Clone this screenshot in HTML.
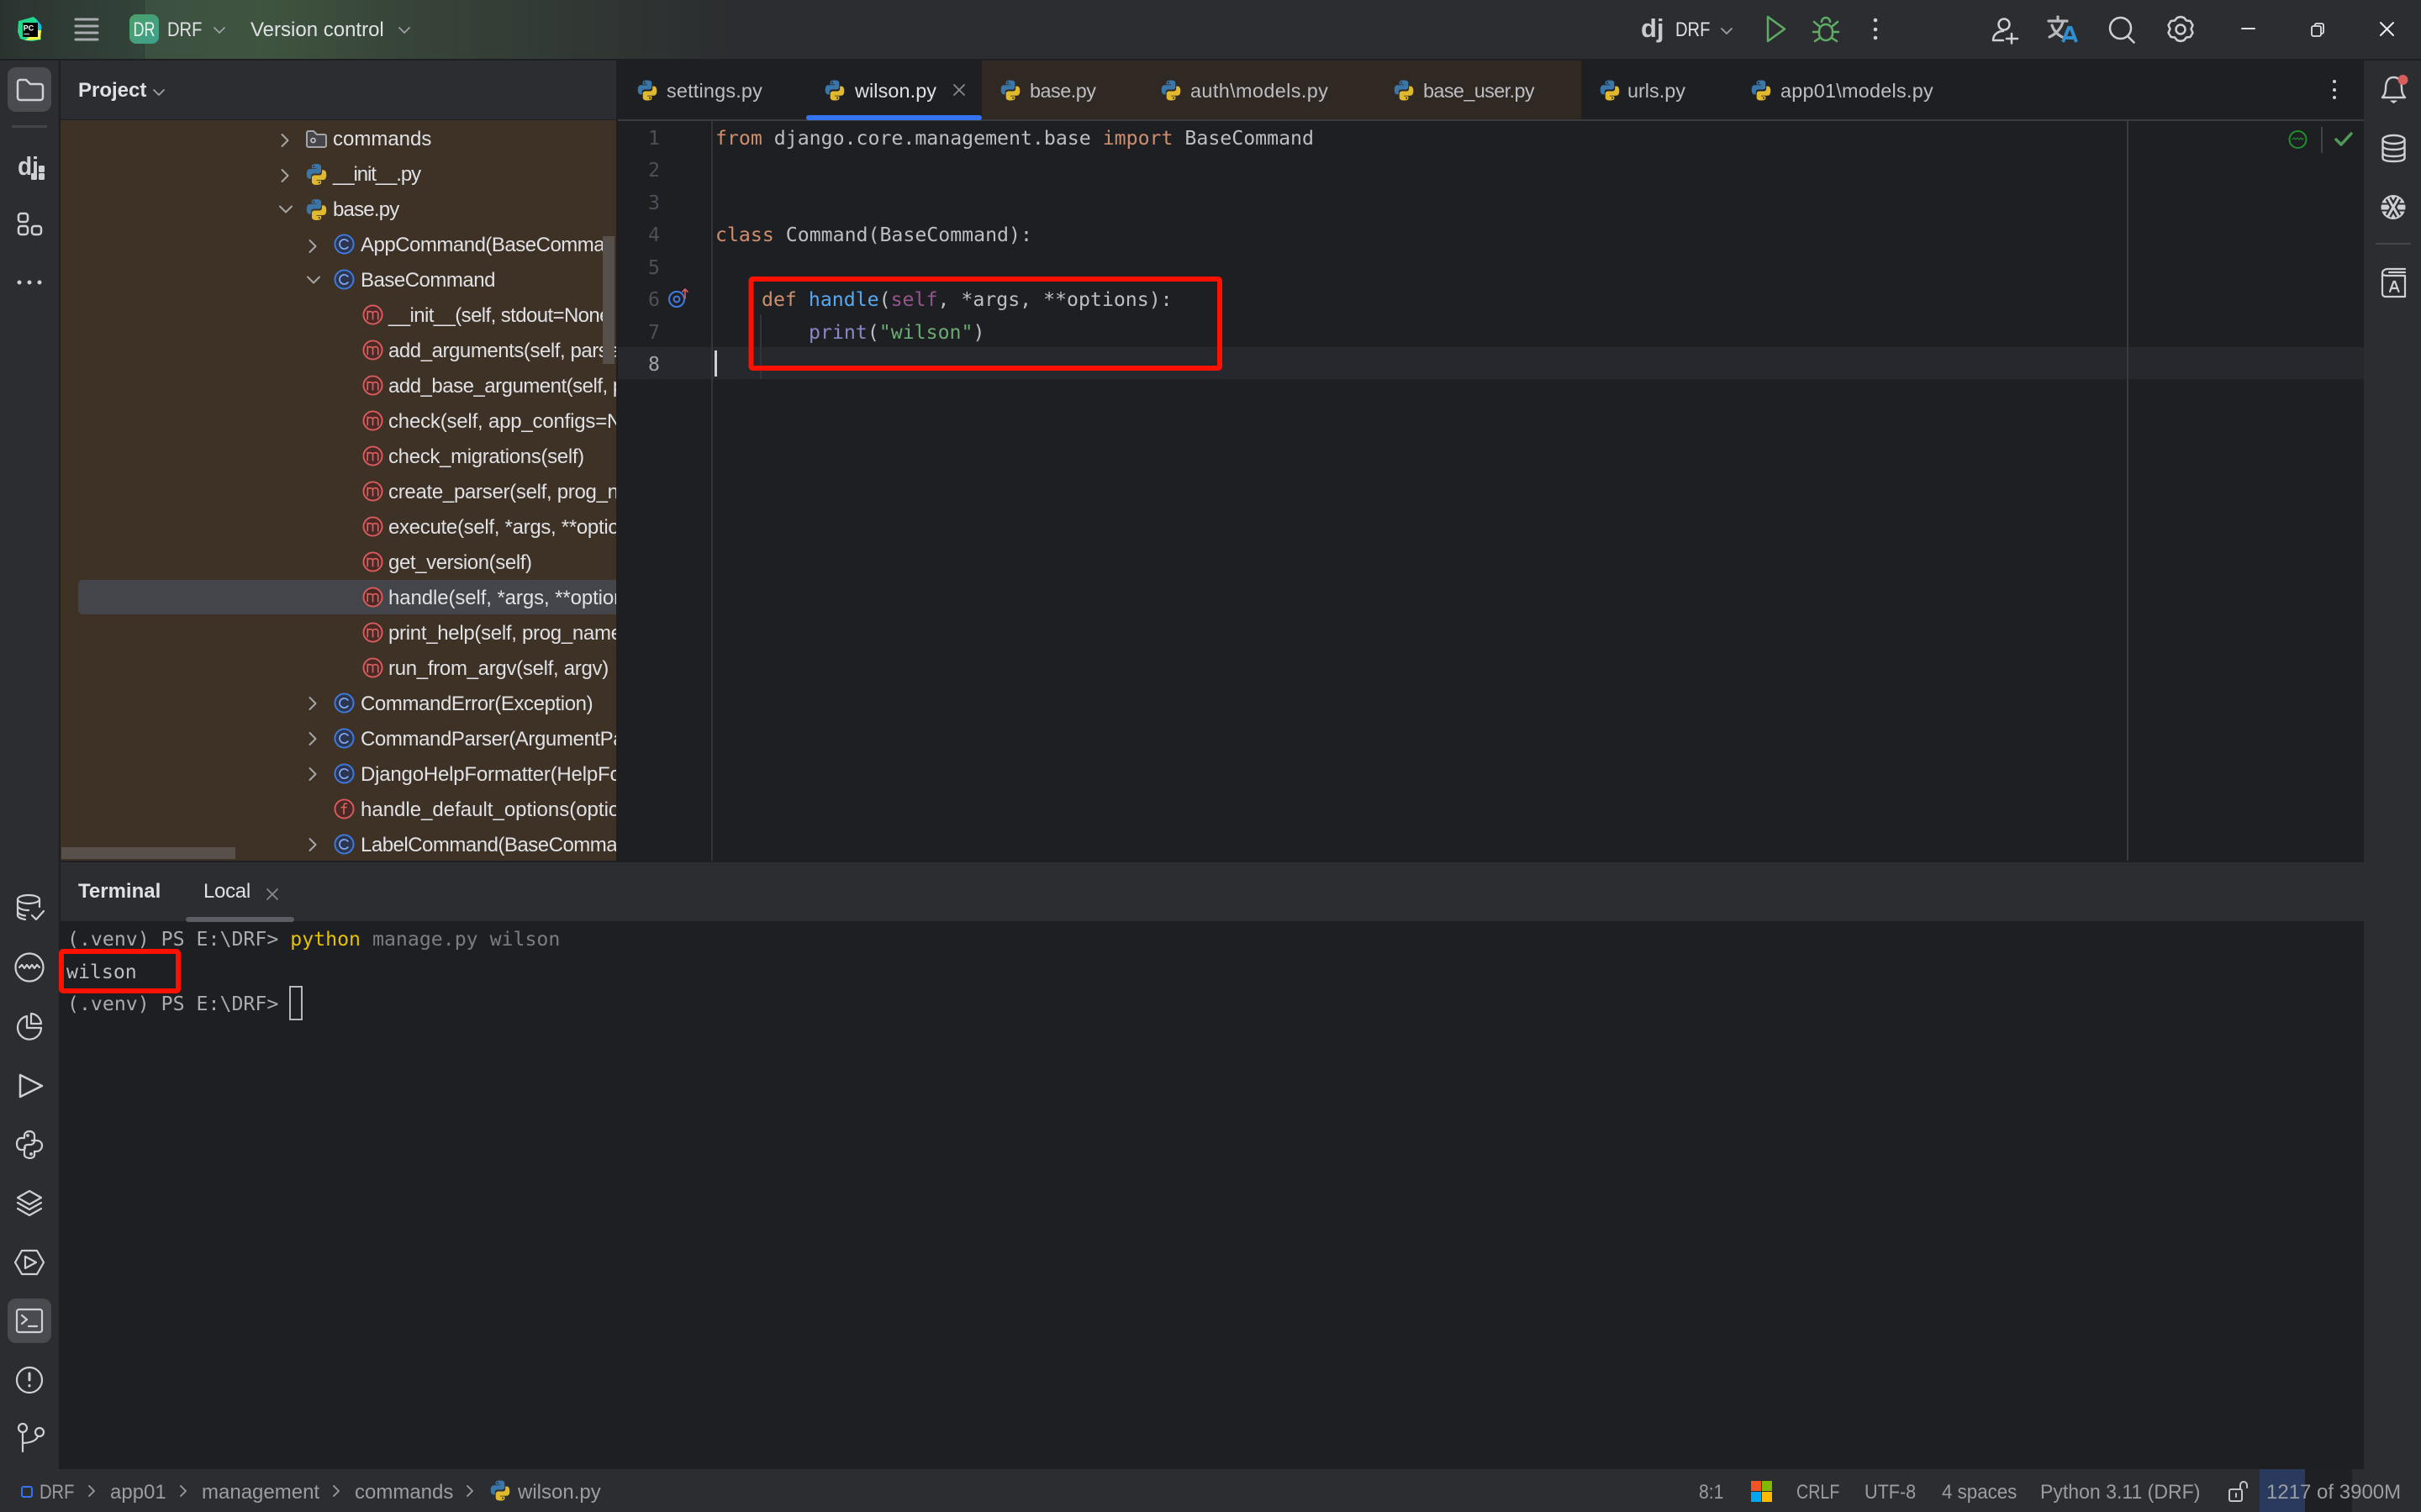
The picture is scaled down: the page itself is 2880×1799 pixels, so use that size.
<!DOCTYPE html>
<html lang="en"><head><meta charset="utf-8"><title>wilson.py - DRF</title>
<style>
html,body{margin:0;padding:0;background:#1e1f22}
#p{position:relative;width:2880px;height:1799px;overflow:hidden;background:#1e1f22;font-family:"Liberation Sans",sans-serif;font-size:24px;color:#dfe1e5}
.b{position:absolute}
.t{position:absolute;white-space:pre;line-height:40px;height:40px;transform-origin:0 50%}
.m{font-family:"DejaVu Sans Mono","Liberation Mono",monospace;font-size:23.2px;white-space:pre;position:absolute;line-height:38px;height:38px;color:#bcbec4}
.tree .t{color:#dfe1e5}
.tab{color:#bcbec4;font-size:23.4px;top:88px}
.st{color:#9a9da4;top:1756px;font-size:24px}
.k{color:#cf8e6d}.f{color:#56a8f5}.s{color:#94558d}.pr{color:#8888c6}.str{color:#6aab73}
.ln{color:#4b5059;width:20px;left:768px;text-align:center}
svg{position:absolute;left:0;top:0}
</style></head><body><div id="p">

<!-- title bar -->
<div class="b" style="left:0;top:0;width:2880px;height:70px;background:#2b2d30"></div>
<div class="b" style="left:0;top:0;width:171px;height:70px;background:linear-gradient(90deg,#2b3330,#33443a)"></div>
<div class="b" style="left:171px;top:0;width:700px;height:70px;background:linear-gradient(90deg,#3c5040 0%,#3f5540 20%,#384539 42%,#2b2d30 100%)"></div>
<div class="t" style="left:199px;top:16px;color:#dfe1e5;transform:scaleX(.84)">DRF</div>
<div class="t" style="left:298px;top:16px;color:#dfe1e5">Version control</div>
<div class="t" style="left:1993px;top:16px;color:#dfe1e5;transform:scaleX(.84)">DRF</div>

<!-- left strip / right strip -->
<div class="b" style="left:0;top:72px;width:70px;height:1676px;background:#2b2d30"></div>
<div class="b" style="left:2812px;top:72px;width:68px;height:1674px;background:#2b2d30"></div>
<div class="b" style="left:9px;top:80px;width:52px;height:53px;background:#494b50;border-radius:10px"></div>
<div class="b" style="left:14px;top:149px;width:42px;height:3px;background:#43454a"></div>
<div class="b" style="left:9px;top:1545px;width:52px;height:53px;background:#494b50;border-radius:10px"></div>
<div class="b" style="left:2826px;top:289px;width:42px;height:2px;background:#43454a"></div>

<!-- project panel -->
<div class="b" style="left:72px;top:72px;width:661px;height:70px;background:#2b2d30"></div>
<div class="b" style="left:72px;top:142px;width:661px;height:1px;background:#1e1f22"></div>
<div class="t" style="left:93px;top:88px;font-weight:bold;color:#dfe1e5">Project</div>
<div class="b tree" style="left:72px;top:143px;width:661px;height:881px;background:#3e3126;overflow:hidden">
 <div class="b" style="left:21px;top:547px;width:640px;height:41px;background:#43454a;border-radius:6px 0 0 6px"></div>
 <div class="t" style="left:324px;top:3px">commands</div>
 <div class="t" style="left:324px;top:45px;letter-spacing:-1.1px">__init__.py</div>
 <div class="t" style="left:324px;top:87px;letter-spacing:-.8px">base.py</div>
 <div class="t" style="left:357px;top:129px;letter-spacing:-.5px">AppCommand(BaseCommand)</div>
 <div class="t" style="left:357px;top:171px;letter-spacing:-.5px">BaseCommand</div>
 <div class="t" style="left:390px;top:213px;letter-spacing:-.6px">__init__(self, stdout=None, stderr=None)</div>
 <div class="t" style="left:390px;top:255px;letter-spacing:-.45px">add_arguments(self, parser)</div>
 <div class="t" style="left:390px;top:297px;letter-spacing:-.5px">add_base_argument(self, parser)</div>
 <div class="t" style="left:390px;top:339px;letter-spacing:-.2px">check(self, app_configs=None)</div>
 <div class="t" style="left:390px;top:381px;letter-spacing:-.33px">check_migrations(self)</div>
 <div class="t" style="left:390px;top:423px;letter-spacing:-.3px">create_parser(self, prog_name)</div>
 <div class="t" style="left:390px;top:465px;letter-spacing:-.3px">execute(self, *args, **options)</div>
 <div class="t" style="left:390px;top:507px;letter-spacing:-.4px">get_version(self)</div>
 <div class="t" style="left:390px;top:549px;letter-spacing:-.1px">handle(self, *args, **options)</div>
 <div class="t" style="left:390px;top:591px;letter-spacing:-.3px">print_help(self, prog_name, subcommand)</div>
 <div class="t" style="left:390px;top:633px;letter-spacing:-.3px">run_from_argv(self, argv)</div>
 <div class="t" style="left:357px;top:675px;letter-spacing:-.4px">CommandError(Exception)</div>
 <div class="t" style="left:357px;top:717px;letter-spacing:-.4px">CommandParser(ArgumentParser)</div>
 <div class="t" style="left:357px;top:759px;letter-spacing:-.2px">DjangoHelpFormatter(HelpFormatter)</div>
 <div class="t" style="left:357px;top:801px">handle_default_options(options)</div>
 <div class="t" style="left:357px;top:843px;letter-spacing:-.5px">LabelCommand(BaseCommand)</div>
 <div class="b" style="left:645px;top:138px;width:14px;height:152px;background:#57504a"></div>
 <div class="b" style="left:1px;top:865px;width:207px;height:14px;background:#57504a"></div>
</div>

<!-- tabs -->
<div class="b" style="left:1168px;top:72px;width:713px;height:70px;background:#2f2823"></div>
<div class="b" style="left:735px;top:142px;width:2077px;height:2px;background:#393b40"></div>
<div class="b" style="left:959px;top:137px;width:209px;height:6px;background:#3574f0;border-radius:4px"></div>
<div class="t tab" style="left:793px;letter-spacing:.2px">settings.py</div>
<div class="t tab" style="left:1017px;color:#dfe1e5;letter-spacing:.1px">wilson.py</div>
<div class="t tab" style="left:1225px;letter-spacing:-.5px">base.py</div>
<div class="t tab" style="left:1416px;letter-spacing:.4px">auth\models.py</div>
<div class="t tab" style="left:1693px;letter-spacing:-.6px">base_user.py</div>
<div class="t tab" style="left:1936px">urls.py</div>
<div class="t tab" style="left:2118px;letter-spacing:.25px">app01\models.py</div>

<!-- editor -->
<div class="b" style="left:735px;top:413px;width:2077px;height:38px;background:#26282e"></div>
<div class="b" style="left:846px;top:144px;width:2px;height:880px;background:#313438"></div>
<div class="b" style="left:2530px;top:144px;width:2px;height:880px;background:#393b40"></div>
<div class="b" style="left:904px;top:374px;width:2px;height:77px;background:#313438"></div>
<div class="m ln" style="top:146px">1</div>
<div class="m ln" style="top:184px">2</div>
<div class="m ln" style="top:223px">3</div>
<div class="m ln" style="top:261px">4</div>
<div class="m ln" style="top:300px">5</div>
<div class="m ln" style="top:338px">6</div>
<div class="m ln" style="top:377px">7</div>
<div class="m ln" style="top:415px;color:#a1a3ab">8</div>
<div class="m" style="left:851px;top:146px"><span class="k">from</span> django.core.management.base <span class="k">import</span> BaseCommand</div>
<div class="m" style="left:851px;top:261px"><span class="k">class</span> Command(BaseCommand):</div>
<div class="m" style="left:906px;top:338px"><span class="k">def</span> <span class="f">handle</span>(<span class="s">self</span>, *args, **options):</div>
<div class="m" style="left:962px;top:377px"><span class="pr">print</span>(<span class="str">"wilson"</span>)</div>
<div class="b" style="left:850px;top:417px;width:3px;height:31px;background:#ced0d6"></div>

<!-- terminal -->
<div class="b" style="left:72px;top:1024px;width:2740px;height:2px;background:#1e1f22"></div>
<div class="b" style="left:72px;top:1026px;width:2740px;height:70px;background:#2b2d30"></div>
<div class="t" style="left:93px;top:1041px;font-weight:bold;color:#dfe1e5">Terminal</div>
<div class="t" style="left:242px;top:1041px;color:#dfe1e5;letter-spacing:-.3px">Local</div>
<div class="b" style="left:221px;top:1091px;width:129px;height:6px;background:#5a5d63;border-radius:3px"></div>
<div class="m" style="left:80px;top:1099px;color:#a9abb2">(.venv) PS E:\DRF&gt; <span style="color:#e5c100">python</span> <span style="color:#7a7d84">manage.py wilson</span></div>
<div class="m" style="left:79px;top:1138px;color:#bcbec4">wilson</div>
<div class="m" style="left:80px;top:1176px;color:#a9abb2">(.venv) PS E:\DRF&gt;</div>
<div class="b" style="left:344px;top:1173px;width:12px;height:37px;border:2px solid #b5b7bd"></div>

<!-- status bar -->
<div class="b" style="left:0;top:1748px;width:2880px;height:51px;background:#2b2d30"></div>
<div class="b" style="left:2812px;top:1746px;width:68px;height:2px;background:#2b2d30"></div>
<div class="b" style="left:2688px;top:1748px;width:54px;height:51px;background:#2a3a5e"></div>
<div class="b" style="left:2742px;top:1748px;width:56px;height:51px;background:#1f2023"></div>
<div class="t st" style="left:47px;transform:scaleX(.84)">DRF</div>
<div class="t st" style="left:131px">app01</div>
<div class="t st" style="left:240px">management</div>
<div class="t st" style="left:422px">commands</div>
<div class="t st" style="left:616px">wilson.py</div>
<div class="t st" style="left:2021px;transform:scaleX(.88)">8:1</div>
<div class="t st" style="left:2137px;transform:scaleX(.82)">CRLF</div>
<div class="t st" style="left:2218px;transform:scaleX(.9)">UTF-8</div>
<div class="t st" style="left:2310px;transform:scaleX(.93)">4 spaces</div>
<div class="t st" style="left:2427px;transform:scaleX(.96)">Python 3.11 (DRF)</div>
<div class="t st" style="left:2696px">1217 of 3900M</div>

<!-- icons -->
<svg width="2880" height="1799" viewBox="0 0 2880 1799" fill="none" stroke-linecap="round" stroke-linejoin="round">
<defs>
<symbol id="py" viewBox="0 0 24 24" overflow="visible">
 <path fill="#3a76a8" fill-rule="evenodd" d="M11.9 0C6.2 0 6.6 2.4 6.6 2.4v2.6h5.4v.8H4.4S.7 5.400.7 11.300s3.200 5.600 3.200 5.600h1.900v-2.700s-.1-3.200 3.100-3.200h5.400s3 0 3-2.900V3.200S17.900 0 11.900 0zM8.900 1.700a1 1 0 110 2 1 1 0 010-2z"/>
 <path fill="#e0b92e" fill-rule="evenodd" d="M12.100 24c5.700 0 5.300-2.400 5.300-2.400V19H12v-.8h7.600s3.700.4 3.700-5.500-3.200-5.600-3.200-5.600h-1.900v2.700s.1 3.200-3.100 3.200H9.700s-3 0-3 2.900v4.300S6.100 24 12.100 24zm3-1.700a1 1 0 110-2 1 1 0 010 2z"/>
</symbol>
<symbol id="cc" viewBox="0 0 26 26" overflow="visible"><circle cx="13" cy="13" r="11.500" fill="#2c3550" stroke="#3f7be0" stroke-width="2"/><path d="M17.500 9.300a5.800 5.800 0 1 0 0 7.400" stroke="#7ea6ef" stroke-width="1.800"/></symbol>
<symbol id="mm" viewBox="0 0 26 26" overflow="visible"><circle cx="13" cy="13" r="11.500" fill="#4a2826" stroke="#db5c5c" stroke-width="2"/><path d="M6.500 18.500v-10M6.500 11c0-2.500 6.200-3 6.500.5v7M13 11c0-2.500 6.500-3 6.500.5v7" stroke="#e0605c" stroke-width="1.700"/></symbol>
<symbol id="ff" viewBox="0 0 26 26" overflow="visible"><circle cx="13" cy="13" r="11.500" fill="#4a2826" stroke="#db5c5c" stroke-width="2"/><path d="M16 6.500c-3-.8-3.500.5-3.500 3v9.500M9.500 11h6" stroke="#e0605c" stroke-width="1.700"/></symbol>
<symbol id="cr" viewBox="0 0 16 20" overflow="visible"><path d="M4.500 3l7 7-7 7" stroke="#a5a6a8" stroke-width="2"/></symbol>
<symbol id="cd" viewBox="0 0 20 16" overflow="visible"><path d="M3 4.500l7 7 7-7" stroke="#a5a6a8" stroke-width="2"/></symbol>
<symbol id="ch" viewBox="0 0 14 10" overflow="visible"><path d="M1 2l6 6 6-6" stroke="#9da0a8" stroke-width="1.800"/></symbol>
</defs>

<!-- title left -->
<path d="M171.500 0v70" stroke="#2d3a34" stroke-width="1" stroke-linecap="butt"/>
<path d="M22 25L40 20L44 24L49 30L47 38L49 47L38 49L30 48L24 46L21 38Z" fill="#21d789"/><path d="M42 21L49 30L49 38L45 30Z" fill="#07c3f2"/><path d="M30 48L48 47L49 36L44 36Z" fill="#fcf84a"/>
<rect x="27" y="27" width="18" height="17" fill="#000"/>
<text x="27.800" y="36.500" font-family="Liberation Sans" font-size="9" font-weight="bold" fill="#fff">PC</text>
<path d="M28.500 40.500h6.500" stroke="#bbb" stroke-width="1.500" stroke-linecap="butt"/>
<path d="M90 23h26M90 31h26M90 39h26M90 47h26" stroke="#a9abae" stroke-width="3" stroke-linecap="round"/>
<defs><linearGradient id="drg" x1="0" y1="0" x2="1" y2="1"><stop offset="0" stop-color="#4aa167"/><stop offset="1" stop-color="#3f9f8f"/></linearGradient></defs>
<rect x="154" y="17" width="35" height="35" rx="8" fill="url(#drg)"/>
<text x="171.500" y="43" text-anchor="middle" font-family="Liberation Sans" font-size="24" fill="#eef2ee" textLength="26" lengthAdjust="spacingAndGlyphs">DR</text>
<use href="#ch" x="254" y="31" width="14" height="10"/>
<use href="#ch" x="474" y="31" width="14" height="10"/>
<use href="#ch" x="182" y="105" width="14" height="10"/>

<!-- title right -->
<text x="1952" y="44" font-family="Liberation Sans" font-size="31" font-weight="bold" fill="#c8cacf">dj</text>
<use href="#ch" x="2047" y="32" width="14" height="10"/>
<path d="M2103 24v29l20-14.500z" transform="translate(0 -4)" stroke="#5fad65" stroke-width="2.500"/>
<g stroke="#5fad65" stroke-width="2.500"><rect x="2164" y="29" width="16" height="19" rx="8"/><path d="M2167 26a5 5 0 0 1 10 0M2158 26l6 5M2186 26l-6 5M2157 38h7M2180 38h7M2159 49l6-4M2185 49l-6-4"/></g>
<circle cx="2231" cy="24" r="2.300" fill="#ced0d6"/><circle cx="2231" cy="35" r="2.300" fill="#ced0d6"/><circle cx="2231" cy="45" r="2.300" fill="#ced0d6"/>
<g stroke="#ced0d6" stroke-width="2.500"><circle cx="2384" cy="29" r="6.500"/><path d="M2371 48c0-7 6-11 12-11M2371 48h12M2393 40v11.500M2387 46h13"/></g>
<path d="M2437 25h22M2448 20v5M2454 26c-2 8-9 15-16 18M2441 30c2 6 6 11 12 14" stroke="#b7b9be" stroke-width="3.200"/>
<path d="M2454 50l7-17h2.500l6.500 17M2457 45h11" stroke="#2f8fd0" stroke-width="4" stroke-linecap="butt" stroke-linejoin="miter"/>
<g stroke="#ced0d6" stroke-width="2.500"><circle cx="2522.500" cy="33.500" r="12.500"/><path d="M2531 43l7.500 7.500"/></g>
<g stroke="#ced0d6" stroke-width="2.500"><path d="M2594 20l4 1 3 3.500 4.500.5 3 5-2 4.500 2 4.500-3 5-4.500.5-3 3.500-4 1-4-1-3-3.500-4.500-.5-3-5 2-4.500-2-4.500 3-5 4.500-.5 3-3.500z"/><circle cx="2594" cy="35" r="5.500"/></g>
<path d="M2667 34h15" stroke="#dfe1e5" stroke-width="2"/>
<g stroke="#dfe1e5" stroke-width="1.800"><rect x="2750" y="31" width="11" height="12" rx="2"/><path d="M2754 30v-1a2 2 0 0 1 2-1h6a2 2 0 0 1 2 2v8a2 2 0 0 1-2 2"/></g>
<path d="M2832 27l15 15M2847 27l-15 15" stroke="#eceef1" stroke-width="2"/>

<!-- left strip top -->
<path d="M21 98a3 3 0 0 1 3-3h7l5 5h12a3 3 0 0 1 3 3v13a3 3 0 0 1-3 3H24a3 3 0 0 1-3-3z" stroke="#ced0d6" stroke-width="2.500"/>
<text x="21" y="208" font-family="Liberation Sans" font-size="31" font-weight="bold" fill="#ced0d6" textLength="25" lengthAdjust="spacingAndGlyphs">di</text>
<g fill="#ced0d6"><rect x="37" y="206" width="7" height="8" rx="1.500"/><rect x="46" y="206" width="7" height="8" rx="1.500"/><rect x="46" y="197" width="7" height="8" rx="1.500"/></g>
<g stroke="#ced0d6" stroke-width="2.500"><rect x="22" y="254" width="11" height="10" rx="3"/><rect x="22" y="269" width="11" height="10" rx="3"/><rect x="38" y="269" width="11" height="10" rx="3"/></g>
<g fill="#ced0d6"><circle cx="23" cy="336" r="2.500"/><circle cx="35" cy="336" r="2.500"/><circle cx="47" cy="336" r="2.500"/></g>

<!-- left strip bottom -->
<g stroke="#ced0d6" stroke-width="2.200">
 <g transform="translate(35 1081)"><ellipse cx="-1" cy="-11" rx="13" ry="5"/><path d="M-14-11v19c0 2 3 4 9 5M12-11v9M-14-3c1 3 6 5 13 5M-14 4c1 2 4 4 9 4.500"/><path d="M3 8l5 5 9-10"/></g>
 <g transform="translate(35 1151)"><circle r="16.500"/><path d="M-12 0l3-3 3 4 3-4 3 4 3-4 3 4 3-4 3 3"/></g>
 <g transform="translate(35 1221)"><path d="M-3-12a14 14 0 1 0 17 14H-3z"/><path d="M2-15a13 13 0 0 1 12 12H2z"/></g>
 <path d="M24 1279v26l26-13z" stroke-width="2.500"/>
 <g transform="translate(35 1362)"><path d="M-6-8v-3c0-3 3-5 6-5s6 2 6 5v6c0 3-2 5-5 5h-3c-3 0-4 2-4 5v4M-6-8h-4c-3 0-5 3-5 7s2 7 5 7h3M3-5h5c4 0 7 2 7 6s-3 7-7 7h-2M6 8v4c0 3-3 4-6 4s-6-2-6-4v-4c0-2 0-3 1-4"/><circle cx="-2" cy="-11" r=".8"/><circle cx="2" cy="11" r=".8"/></g>
 <g transform="translate(35 1432)"><path d="M0-15l14 8-14 8-14-8z"/><path d="M-14-1l14 8 14-8M-14 6l14 8 14-8"/></g>
 <g transform="translate(35 1502)"><path d="M-9-14H9l8 14-8 14H-9l-8-14z"/><path d="M-5-7L8 0-5 7z"/></g>
 <g transform="translate(35 1572)"><rect x="-15" y="-14" width="30" height="27" rx="2.500"/><path d="M-9-7l6 5-6 5M-1 6h10"/></g>
 <g transform="translate(35 1642)"><circle r="15"/><path d="M0-8v8M0 6.500v.5" stroke-width="3"/></g>
 <g transform="translate(35 1711)"><circle cx="-8" cy="-12" r="5"/><circle cx="12" cy="-7" r="5"/><path d="M-8-7V16M-8 6C-4 6 8 5 10-2"/></g>
</g>

<!-- tree icons -->
<use href="#cr" x="331" y="157" width="16" height="20"/>
<path d="M365 158a2 2 0 0 1 2-2h6l4 4h9a2 2 0 0 1 2 2v11a2 2 0 0 1-2 2h-19a2 2 0 0 1-2-2z" fill="#45454a" stroke="#a5a6a8" stroke-width="2"/><circle cx="372.500" cy="167" r="2.500" stroke="#c3c5ca" stroke-width="1.600"/>
<use href="#cr" x="331" y="199" width="16" height="20"/><use href="#py" x="364" y="195" width="25" height="25"/>
<use href="#cd" x="330" y="241" width="20" height="16"/><use href="#py" x="364" y="237" width="25" height="25"/>
<use href="#cr" x="364" y="283" width="16" height="20"/><use href="#cc" x="397" y="278" width="25" height="25"/>
<use href="#cd" x="363" y="325" width="20" height="16"/><use href="#cc" x="397" y="320" width="25" height="25"/>
<use href="#mm" x="431" y="362" width="25" height="25"/><use href="#mm" x="431" y="404" width="25" height="25"/><use href="#mm" x="431" y="446" width="25" height="25"/><use href="#mm" x="431" y="488" width="25" height="25"/>
<use href="#mm" x="431" y="530" width="25" height="25"/><use href="#mm" x="431" y="572" width="25" height="25"/><use href="#mm" x="431" y="614" width="25" height="25"/><use href="#mm" x="431" y="656" width="25" height="25"/>
<use href="#mm" x="431" y="698" width="25" height="25"/><use href="#mm" x="431" y="740" width="25" height="25"/><use href="#mm" x="431" y="782" width="25" height="25"/>
<use href="#cr" x="364" y="827" width="16" height="20"/><use href="#cc" x="397" y="824" width="25" height="25"/>
<use href="#cr" x="364" y="869" width="16" height="20"/><use href="#cc" x="397" y="866" width="25" height="25"/>
<use href="#cr" x="364" y="911" width="16" height="20"/><use href="#cc" x="397" y="908" width="25" height="25"/>
<use href="#ff" x="397" y="950" width="25" height="25"/>
<use href="#cr" x="364" y="995" width="16" height="20"/><use href="#cc" x="397" y="992" width="25" height="25"/>

<!-- tab icons -->
<use href="#py" x="758" y="95" width="24" height="25"/><use href="#py" x="981" y="95" width="24" height="25"/><use href="#py" x="1190" y="95" width="24" height="25"/><use href="#py" x="1381" y="95" width="24" height="25"/><use href="#py" x="1658" y="95" width="24" height="25"/><use href="#py" x="1903" y="95" width="24" height="25"/><use href="#py" x="2083" y="95" width="24" height="25"/>
<path d="M1135 101l12 12M1147 101l-12 12" stroke="#85888f" stroke-width="1.800"/>
<circle cx="2777" cy="97" r="2" fill="#ced0d6"/><circle cx="2777" cy="107" r="2" fill="#ced0d6"/><circle cx="2777" cy="116" r="2" fill="#ced0d6"/>

<!-- editor gutter and inspection -->
<g stroke="#3f7be0" stroke-width="2"><circle cx="805" cy="356" r="9"/><circle cx="805" cy="356" r="3.500"/></g>
<path d="M815 355v-11M812 347l3-3 3 3" stroke="#db5c5c" stroke-width="1.600"/>
<circle cx="2733.500" cy="166" r="10" stroke="#1f8f2c" stroke-width="2"/><path d="M2727 166l2-2 2 2 2-2 2 2 2-2 2 2 1-1" stroke="#1f8f2c" stroke-width="1.200"/>
<path d="M2762 151v31" stroke="#43454a" stroke-width="2" stroke-linecap="butt"/>
<path d="M2779 166l6 6 12-13" stroke="#4f9a58" stroke-width="3.500"/>

<!-- right strip -->
<g stroke="#ced0d6" stroke-width="2.400">
 <path d="M2834 116h27c-3-3-4-7-4-11 0-8-3-13-9.500-13s-9.500 5-9.500 13c0 4-1 8-4 11z"/>
 <path d="M2844 120h7l-3.500 2.500z" fill="#ced0d6" stroke-width="1"/>
 <g><ellipse cx="2847.500" cy="166" rx="13" ry="5"/><path d="M2834.500 166v22c0 3 6 4 13 4s13-1 13-4v-22M2834.500 174c1 3 6 4 13 4s12-1 13-4M2834.500 182c1 3 6 4 13 4s12-1 13-4"/></g>
 <path d="M2861 320H2841c-4 0-7 2-7 5v24c0 3 2 4 4 4H2861V328H2840c-4 0-6-1-6-3M2842 324H2861M2843 347l4.500-12h1.500l4.500 12M2845 343h7" stroke-width="2.200"/>
</g>
<circle cx="2858.500" cy="95" r="6" fill="#db5c5c"/>
<circle cx="2847" cy="246.500" r="14.500" fill="#ced0d6"/>
<path d="M2832 242.500h30M2832 250.500h30" stroke="#2b2d30" stroke-width="2" stroke-linecap="butt"/>
<path d="M2841 236l12 21M2853 236l-12 21" stroke="#2b2d30" stroke-width="7.500" stroke-linecap="butt"/>
<path d="M2841 236l12 21M2853 236l-12 21" stroke="#ced0d6" stroke-width="3" stroke-linecap="butt"/>

<!-- terminal close -->
<path d="M318 1058l12 12M330 1058l-12 12" stroke="#85888f" stroke-width="1.800"/>

<!-- status -->
<rect x="26" y="1769" width="12" height="12" rx="2" stroke="#3574f0" stroke-width="2"/>
<path d="M106 1768l6 6-6 6M215 1768l6 6-6 6M397 1768l6 6-6 6M556 1768l6 6-6 6" stroke="#9a9da4" stroke-width="1.800"/>
<use href="#py" x="583" y="1761" width="24" height="25"/>
<rect x="2083" y="1762" width="12" height="12" fill="#f25325"/><rect x="2096" y="1762" width="12" height="12" fill="#7fba00"/><rect x="2083" y="1775" width="12" height="12" fill="#05a6f0"/><rect x="2096" y="1775" width="12" height="12" fill="#ffb900"/>
<g stroke="#c3c5ca" stroke-width="2"><rect x="2652" y="1772" width="15" height="14" rx="2"/><path d="M2660 1777v4M2665 1772v-5a4 4 0 0 1 8 0v3"/></g>

<!-- annotation boxes -->
<rect x="893.500" y="332" width="557.500" height="106" rx="2" stroke="#ff1100" stroke-width="6"/>
<rect x="73" y="1132" width="139" height="47" rx="2" stroke="#ff1100" stroke-width="6"/>
</svg>
</div></body></html>
